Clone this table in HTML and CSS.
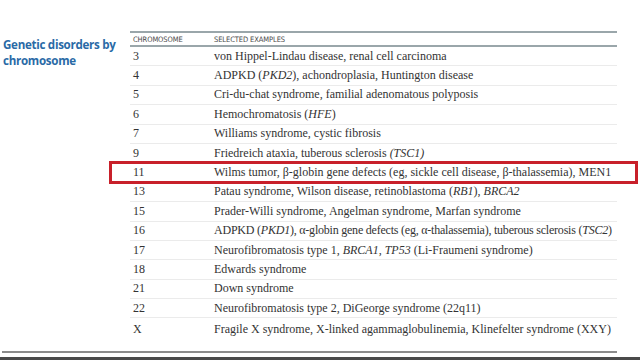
FILE: index.html
```html
<!DOCTYPE html>
<html>
<head>
<meta charset="utf-8">
<link rel="stylesheet" href="styles.css">
</head>
<body>
<div class="page">
  <div class="main">
    <h1 class="title">Genetic disorders by chromosome</h1>
    <div class="table">
      <div class="row head"><div class="c1">CHROMOSOME</div><div class="c2">SELECTED EXAMPLES</div></div>
      <div class="row"><div class="c1">3</div><div class="c2">von Hippel-Lindau disease, renal cell carcinoma</div></div>
      <div class="row"><div class="c1">4</div><div class="c2">ADPKD (<i>PKD2</i>), achondroplasia, Huntington disease</div></div>
      <div class="row"><div class="c1">5</div><div class="c2">Cri-du-chat syndrome, familial adenomatous polyposis</div></div>
      <div class="row"><div class="c1">6</div><div class="c2">Hemochromatosis (<i>HFE</i>)</div></div>
      <div class="row"><div class="c1">7</div><div class="c2">Williams syndrome, cystic fibrosis</div></div>
      <div class="row"><div class="c1">9</div><div class="c2">Friedreich ataxia, tuberous sclerosis <i>(TSC1)</i></div></div>
      <div class="row hl"><div class="c1">11</div><div class="c2">Wilms tumor, β-globin gene defects (eg, sickle cell disease, β-thalassemia), MEN1</div><div class="box"></div></div>
      <div class="row"><div class="c1">13</div><div class="c2">Patau syndrome, Wilson disease, retinoblastoma (<i>RB1</i>), <i>BRCA2</i></div></div>
      <div class="row"><div class="c1">15</div><div class="c2">Prader-Willi syndrome, Angelman syndrome, Marfan syndrome</div></div>
      <div class="row"><div class="c1">16</div><div class="c2 tight">ADPKD (<i>PKD1</i>), α-globin gene defects (eg, α-thalassemia), tuberous sclerosis (<i>TSC2</i>)</div></div>
      <div class="row"><div class="c1">17</div><div class="c2">Neurofibromatosis type 1, <i>BRCA1</i>, <i>TP53</i> (Li-Fraumeni syndrome)</div></div>
      <div class="row"><div class="c1">18</div><div class="c2">Edwards syndrome</div></div>
      <div class="row"><div class="c1">21</div><div class="c2">Down syndrome</div></div>
      <div class="row"><div class="c1">22</div><div class="c2">Neurofibromatosis type 2, DiGeorge syndrome (22q11)</div></div>
      <div class="row last"><div class="c1">X</div><div class="c2">Fragile X syndrome, X-linked agammaglobulinemia, Klinefelter syndrome (XXY)</div></div>
    </div>
  </div>
  <div class="rule"></div>
  <div class="band"></div>
</div>
</body>
</html>
```

FILE: styles.css
```css
* { box-sizing: border-box; }
html, body { margin: 0; padding: 0; background: #fff; }
body { width: 640px; height: 360px; overflow: hidden; }
.page { display: flex; flex-direction: column; height: 360px; }
.main { display: flex; padding-top: 31px; }
.title {
  margin: 6px 0 0 3px;
  width: 127px;
  font-family: "Open Sans", "Noto Sans", sans-serif;
  font-weight: 700;
  font-size: 11.6px;
  line-height: 15.5px;
  color: #2a6aa6;
  letter-spacing: -0.3px;
}
.table { width: 487px; border-top: 2px solid #9aa6aa; }
.row {
  position: relative;
  display: grid;
  grid-template-columns: 84px 1fr;
  height: 19.4px;
  align-items: center;
  border-bottom: 1px solid #ebebeb;
  font-family: "Liberation Serif", serif;
  font-size: 12px;
  color: #333;
  white-space: nowrap;
}
.row .c1 { padding-left: 3px; }
.row .tight { letter-spacing: -0.22px; }
.row.head {
  height: 14px;
  border-bottom: 2px solid #9aa6aa;
  font-family: "DejaVu Sans Condensed", "DejaVu Sans", sans-serif;
  font-stretch: condensed;
  font-size: 7.5px;
  color: #4a4a4a;
  letter-spacing: -0.1px;
}
.row.last { border-bottom: none; height: 22px; }
.box {
  position: absolute;
  left: -21px;
  top: -2px;
  width: 529px;
  height: 23px;
  border: 3px solid #c8202a;
}
.rule { margin: 11px 0 0 2px; width: 615px; height: 2px; background: #8c8c8c; }
.band { margin-top: 4px; flex: 1; background: #4a4a4a; }
```
